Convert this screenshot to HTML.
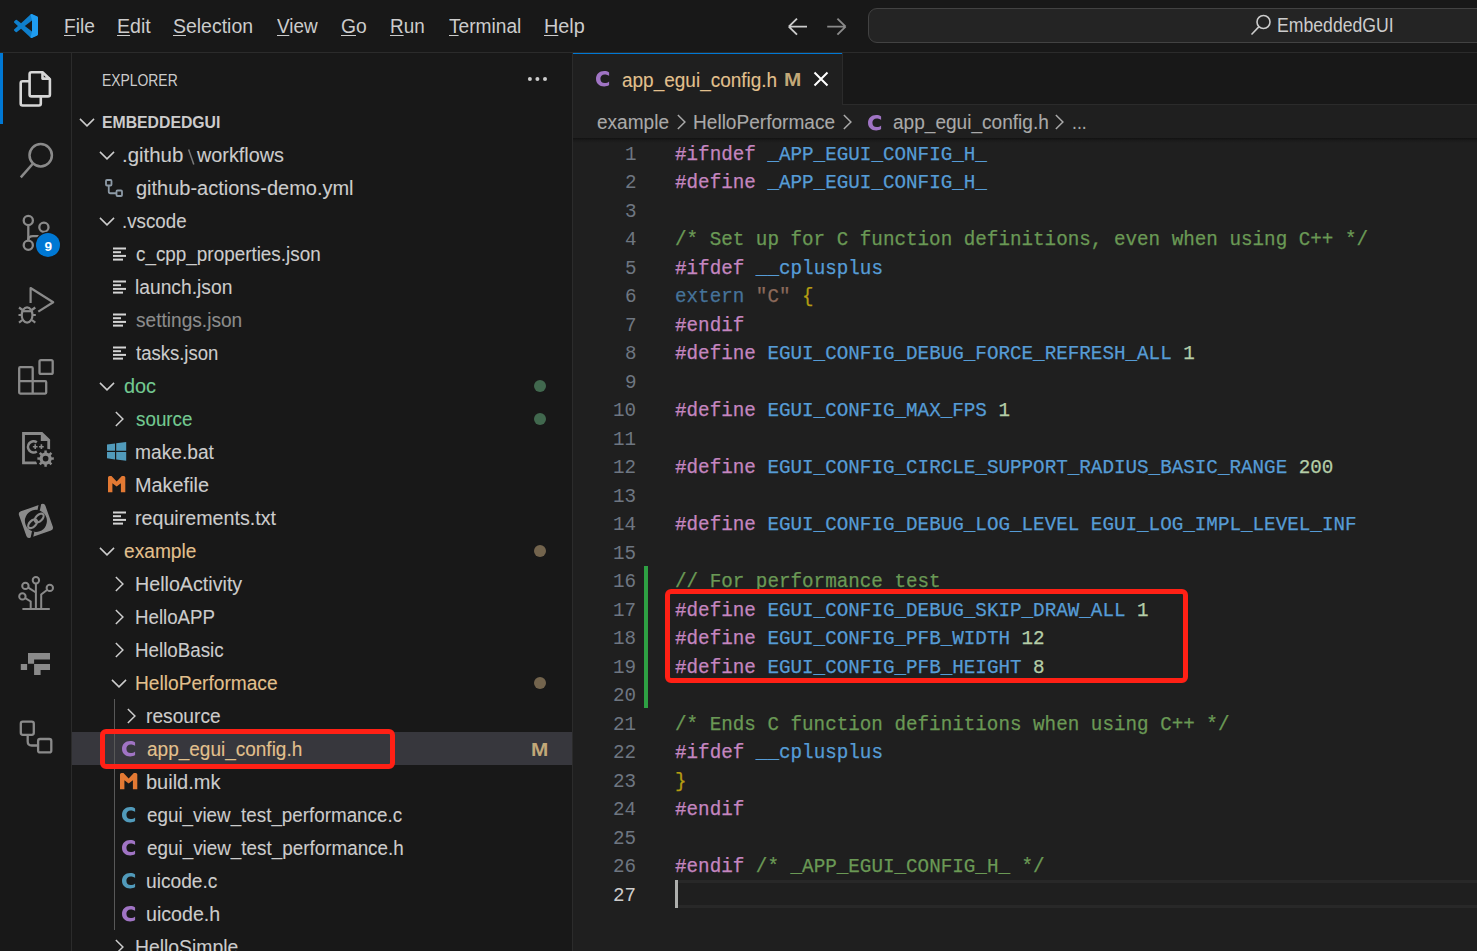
<!DOCTYPE html><html><head><meta charset="utf-8"><style>
*{box-sizing:border-box}
html,body{margin:0;padding:0}
body{width:1477px;height:951px;overflow:hidden;position:relative;background:#1f1f1f;font-family:"Liberation Sans",sans-serif;color:#cccccc}
.a{position:absolute;white-space:pre}
u{text-decoration:underline;text-underline-offset:2px;text-decoration-thickness:1.3px}
.cl{position:absolute;left:0;font-family:"Liberation Mono",monospace;white-space:pre;color:#cccccc;transform-origin:0 0;-webkit-text-stroke:0.25px}
.ln{position:absolute;font-family:"Liberation Mono",monospace;white-space:pre;color:#6e7681;transform-origin:0 0}
.k{color:#c586c0}.m{color:#569cd6}.n{color:#b5cea8}.c{color:#6a9955}

</style></head><body>
<div class="a" style="left:0;top:0;width:1477px;height:52px;background:#181818"></div>
<div class="a" style="left:0;top:52px;width:1477px;height:1px;background:#2b2b2b"></div>
<svg class="a" style="left:14px;top:14px" width="24" height="24" viewBox="0 0 100 100">
<path d="M96.5 10.8 75.9 0.9a6.2 6.2 0 0 0-7.1 1.2L29.4 38.1 12.2 25.1a4.2 4.2 0 0 0-5.3.2L1.4 30.3a4.2 4.2 0 0 0 0 6.2L16.3 50 1.4 63.5a4.2 4.2 0 0 0 0 6.2l5.5 5a4.2 4.2 0 0 0 5.3.2l17.2-13L68.8 97.9a6.2 6.2 0 0 0 7.1 1.2l20.6-9.9a6.2 6.2 0 0 0 3.5-5.6V16.4a6.2 6.2 0 0 0-3.5-5.6zM75 72.7 45.1 50 75 27.3z" fill="#0f7fcc"/>
<path d="M96.5 10.8 75.9 0.9a6.2 6.2 0 0 0-7.1 1.2L75 27.3v45.4l-6.2 25.2a6.2 6.2 0 0 0 7.1 1.2l20.6-9.9a6.2 6.2 0 0 0 3.5-5.6V16.4a6.2 6.2 0 0 0-3.5-5.6z" fill="#1f9cf0"/>
</svg>
<svg class="a" style="left:786px;top:16px" width="24" height="21" viewBox="0 0 24 21">
<path d="M2.8 10.6H21M2.8 10.6L11 2.6M2.8 10.6L11 18.6" stroke="#cccccc" stroke-width="1.9" fill="none"/></svg>
<svg class="a" style="left:825px;top:16px" width="24" height="21" viewBox="0 0 24 21">
<path d="M2.2 10.6H20.6M20.6 10.6L12.4 2.6M20.6 10.6L12.4 18.6" stroke="#8a8a8a" stroke-width="1.9" fill="none"/></svg>
<div class="a" style="left:868px;top:8px;width:640px;height:35px;border:1.5px solid #424242;border-radius:9px;background:#242424"></div>
<svg class="a" style="left:1249px;top:13px" width="24" height="24" viewBox="0 0 24 24">
<circle cx="14.5" cy="9" r="6.5" stroke="#cccccc" stroke-width="1.6" fill="none"/><path d="M10 13.6L2.5 21.5" stroke="#cccccc" stroke-width="1.6"/></svg>
<div class="a" style="left:0;top:53px;width:71px;height:898px;background:#181818"></div>
<div class="a" style="left:71px;top:53px;width:1px;height:898px;background:#2b2b2b"></div>
<div class="a" style="left:0;top:53px;width:3px;height:71px;background:#0078d4"></div>
<svg class="a" style="left:0;top:0" width="72" height="951" viewBox="0 0 72 951">
<g fill="none" stroke="#d7d7d7" stroke-width="2.6" stroke-linejoin="round">
<path d="M31.5 72.2H42.5L49.9 79.3V94.5Q49.9 96.4 48 96.4H31.5Q29.6 96.4 29.6 94.5V74.1Q29.6 72.2 31.5 72.2Z"/>
<path d="M42.5 72.2V78.6H49.9"/>
<path d="M29.6 81.3H22.6Q20.7 81.3 20.7 83.2V103.6Q20.7 105.5 22.6 105.5H38.9Q40.8 105.5 40.8 103.6V96.4"/>
</g>
<g fill="none" stroke="#8a8a8a" stroke-width="2.5">
<circle cx="40.7" cy="155.3" r="11.2"/>
<path d="M33 163.5L20.8 177.4"/>
</g>
<g fill="none" stroke="#8a8a8a" stroke-width="2.3">
<circle cx="28.3" cy="220.5" r="4.6"/>
<circle cx="43.9" cy="227.3" r="4.6"/>
<circle cx="28.3" cy="245.2" r="4.6"/>
<path d="M28.3 225.1V240.6"/>
<path d="M28.3 240Q28.3 236.1 33 236.1H40Q43.9 236.1 43.9 232"/>
</g>
<circle cx="48" cy="244.9" r="13.2" fill="#181818"/>
<circle cx="48" cy="244.9" r="12" fill="#0078d4"/>
<text x="48.3" y="251.2" text-anchor="middle" font-family="Liberation Sans" font-weight="bold" font-size="13.5" fill="#ffffff">9</text>
<g fill="none" stroke="#8a8a8a" stroke-width="2.2" stroke-linejoin="round">
<path d="M30.6 303.1V288L53.2 302.2L38.3 311.6"/>
<ellipse cx="27.1" cy="315" rx="5.4" ry="7.6"/>
<path d="M21.8 311.2H32.4"/>
<path d="M19 307.5L22.5 310M35.3 307.5L31.8 310M18.5 315H21.7M32.5 315H35.8M19 322.6L22.4 320M35.3 322.6L31.9 320"/>
</g>
<g fill="none" stroke="#8a8a8a" stroke-width="2.3" stroke-linejoin="round">
<path d="M19.2 368.2Q19.2 367.2 20.2 367.2H31.7Q32.7 367.2 32.7 368.2V381.2H45.2Q46.2 381.2 46.2 382.2V392.6Q46.2 393.6 45.2 393.6H20.2Q19.2 393.6 19.2 392.6Z"/>
<path d="M19.2 381.2H32.7V393.6"/>
<rect x="39.5" y="360.1" width="13.2" height="13.8" rx="1.5"/>
</g>
<!-- cpp config -->
<g fill="none" stroke="#8a8a8a" stroke-width="2.8" stroke-linejoin="miter">
<path d="M36.9 462.9H23.5V433.5H41.5"/>
<path d="M48.7 440.5V449.5"/>
<path d="M36.81 442.31A5.6 5.6 0 1 0 36.81 451.49" stroke-width="2.65"/>
</g>
<path d="M40.8 432.1H42.3L50.1 439.5V441H40.8Z" fill="#8a8a8a"/>
<g fill="#8a8a8a"><path d="M34.4 444.35h1.6v1.55h1.55v1.6h-1.55v1.55h-1.6v-1.55h-1.55v-1.6h1.55z"/><path d="M40.6 444.35h1.6v1.55h1.55v1.6h-1.55v1.55h-1.6v-1.55h-1.55v-1.6h1.55z"/></g>
<circle cx="45.6" cy="458.6" r="10" fill="#181818"/>
<path fill="#8a8a8a" fill-rule="evenodd" d="M51.68 457.39L53.81 457.37L53.81 459.83L51.68 459.81L50.76 462.04L52.28 463.53L50.53 465.28L49.04 463.76L46.81 464.68L46.83 466.81L44.37 466.81L44.39 464.68L42.16 463.76L40.67 465.28L38.92 463.53L40.44 462.04L39.52 459.81L37.39 459.83L37.39 457.37L39.52 457.39L40.44 455.16L38.92 453.67L40.67 451.92L42.16 453.44L44.39 452.52L44.37 450.39L46.83 450.39L46.81 452.52L49.04 453.44L50.53 451.92L52.28 453.67L50.76 455.16ZM45.60 455.75A2.85 2.85 0 1 0 45.60 461.45A2.85 2.85 0 1 0 45.60 455.75Z"/>
<!-- rotated link icon -->
<g transform="translate(35.9 520.9) rotate(-19.5)">
<path fill="#8a8a8a" fill-rule="evenodd" d="M-11-14H11Q14-14 14-11V11Q14 14 11 14H-11Q-14 14-14 11V-11Q-14-14-11-14ZM0-11A11 11 0 1 0 0 11A11 11 0 1 0 0-11Z"/>
<path d="M10-15.5L6-8.8M-10 15.5L-6 8.8" stroke="#181818" stroke-width="2.4"/>
</g>
<g transform="translate(35.9 520.9)" fill="none" stroke="#8a8a8a" stroke-width="2.2">
<ellipse cx="-3.3" cy="2.9" rx="3.1" ry="5.4" transform="rotate(45 -3.3 2.9)"/>
<ellipse cx="3.3" cy="-2.9" rx="3.1" ry="5.4" transform="rotate(45 3.3 -2.9)"/>
</g>
<!-- tree icon -->
<g fill="none" stroke="#8a8a8a" stroke-width="2">
<path d="M22.4 609H49.8"/>
<path d="M30.7 609V601.5L24.8 597.8"/>
<path d="M35.9 609V583.5"/>
<path d="M35.9 592.5L28.3 587.6"/>
<path d="M41.2 609V594.5L47.3 589.8"/>
<circle cx="22.4" cy="596.4" r="3.2"/>
<circle cx="25.4" cy="585.9" r="3.2"/>
<circle cx="35.9" cy="580.2" r="3.2"/>
<circle cx="49.8" cy="587.9" r="3.2"/>
</g>
<!-- blocks icon -->
<g fill="#8a8a8a">
<path d="M28 653.1H50V659.6H34.1V663.7H28Z"/>
<path d="M34.1 664H50V670H40.6V674.9H34.1Z"/>
<rect x="20.8" y="664" width="6.3" height="6"/>
</g>
<!-- nodes icon -->
<g fill="none" stroke="#8a8a8a" stroke-width="2.3">
<rect x="20.8" y="721.7" width="13" height="13.1" rx="2"/>
<rect x="38.1" y="739" width="13.2" height="13.4" rx="2"/>
<path d="M27.7 734.8V741.5Q27.7 745.5 31.7 745.5H38.1"/>
</g>
</svg>
<div class="a" style="left:72px;top:53px;width:500px;height:898px;background:#181818"></div>
<div class="a" style="left:572px;top:53px;width:1px;height:898px;background:#2b2b2b"></div>
<svg class="a" style="left:520px;top:69px" width="34" height="20"><circle cx="9.9" cy="10.1" r="2" fill="#cccccc"/><circle cx="17.4" cy="10.1" r="2" fill="#cccccc"/><circle cx="25" cy="10.1" r="2" fill="#cccccc"/></svg>
<div class="a" style="left:72px;top:732px;width:500px;height:33px;background:#37373d"></div>
<div class="a" style="left:114px;top:699px;width:1px;height:231px;background:#585858"></div>
<svg class="a" style="left:74.5px;top:109.5px" width="24" height="24" viewBox="0 0 16 16"><path d="M3.3 5.9L8 10.6L12.7 5.9" stroke="#cccccc" stroke-width="1.0" fill="none"/></svg>
<svg class="a" style="left:185px;top:146px" width="12" height="22"><path d="M3.6 3.4L8.8 18.6" stroke="#7a7a7a" stroke-width="1.5"/></svg>
<svg class="a" style="left:94.5px;top:142.5px" width="24" height="24" viewBox="0 0 16 16"><path d="M3.3 5.9L8 10.6L12.7 5.9" stroke="#cccccc" stroke-width="1.0" fill="none"/></svg>
<svg class="a" style="left:105px;top:179px" width="19" height="19" viewBox="0 0 19 19"><g fill="none" stroke="#8d9aa6" stroke-width="1.8"><rect x="1" y="1" width="5.5" height="5.5" rx="1"/><rect x="11.5" y="11.5" width="5.5" height="5.5" rx="1"/><path d="M3.75 6.5V12.5Q3.75 14.25 5.5 14.25H11.5"/></g></svg>
<svg class="a" style="left:94.5px;top:208.5px" width="24" height="24" viewBox="0 0 16 16"><path d="M3.3 5.9L8 10.6L12.7 5.9" stroke="#cccccc" stroke-width="1.0" fill="none"/></svg>
<svg class="a" style="left:113px;top:246.5px" width="14" height="14" viewBox="0 0 14 14"><g fill="#d4d4d4"><rect x="0" y="0.5" width="13" height="2"/><rect x="0" y="4.2" width="8" height="2"/><rect x="0" y="7.9" width="13" height="2"/><rect x="0" y="11.6" width="10" height="2"/></g></svg>
<svg class="a" style="left:113px;top:279.5px" width="14" height="14" viewBox="0 0 14 14"><g fill="#d4d4d4"><rect x="0" y="0.5" width="13" height="2"/><rect x="0" y="4.2" width="8" height="2"/><rect x="0" y="7.9" width="13" height="2"/><rect x="0" y="11.6" width="10" height="2"/></g></svg>
<svg class="a" style="left:113px;top:312.5px" width="14" height="14" viewBox="0 0 14 14"><g fill="#d4d4d4"><rect x="0" y="0.5" width="13" height="2"/><rect x="0" y="4.2" width="8" height="2"/><rect x="0" y="7.9" width="13" height="2"/><rect x="0" y="11.6" width="10" height="2"/></g></svg>
<svg class="a" style="left:113px;top:345.5px" width="14" height="14" viewBox="0 0 14 14"><g fill="#d4d4d4"><rect x="0" y="0.5" width="13" height="2"/><rect x="0" y="4.2" width="8" height="2"/><rect x="0" y="7.9" width="13" height="2"/><rect x="0" y="11.6" width="10" height="2"/></g></svg>
<svg class="a" style="left:94.5px;top:373.5px" width="24" height="24" viewBox="0 0 16 16"><path d="M3.3 5.9L8 10.6L12.7 5.9" stroke="#cccccc" stroke-width="1.0" fill="none"/></svg>
<svg class="a" style="left:106.5px;top:406.5px" width="24" height="24" viewBox="0 0 16 16"><path d="M5.9 3.3L10.6 8L5.9 12.7" stroke="#cccccc" stroke-width="1.0" fill="none"/></svg>
<svg class="a" style="left:106.8px;top:442px" width="20" height="19" viewBox="0 0 20 19"><path d="M0 2.6L8 1.4V8.8H0ZM9.2 1.2L19.2 0V8.8H9.2ZM0 10H8V17.4L0 16.2ZM9.2 10H19.2V18.8L9.2 17.6Z" fill="#519aba"/></svg>
<svg class="a" style="left:107.9px;top:475.9px" width="18" height="17" viewBox="0 0 18 17"><path d="M0 16.3V1.5Q0 0 1.5 0H3.5L8.65 5.6L13.8 0H15.8Q17.3 0 17.3 1.5V16.3H12.9V7.3L8.65 10.5L4.4 7.3V16.3Z" fill="#e37933"/></svg>
<svg class="a" style="left:113px;top:510.5px" width="14" height="14" viewBox="0 0 14 14"><g fill="#d4d4d4"><rect x="0" y="0.5" width="13" height="2"/><rect x="0" y="4.2" width="8" height="2"/><rect x="0" y="7.9" width="13" height="2"/><rect x="0" y="11.6" width="10" height="2"/></g></svg>
<svg class="a" style="left:94.5px;top:538.5px" width="24" height="24" viewBox="0 0 16 16"><path d="M3.3 5.9L8 10.6L12.7 5.9" stroke="#cccccc" stroke-width="1.0" fill="none"/></svg>
<svg class="a" style="left:106.5px;top:571.5px" width="24" height="24" viewBox="0 0 16 16"><path d="M5.9 3.3L10.6 8L5.9 12.7" stroke="#cccccc" stroke-width="1.0" fill="none"/></svg>
<svg class="a" style="left:106.5px;top:604.5px" width="24" height="24" viewBox="0 0 16 16"><path d="M5.9 3.3L10.6 8L5.9 12.7" stroke="#cccccc" stroke-width="1.0" fill="none"/></svg>
<svg class="a" style="left:106.5px;top:637.5px" width="24" height="24" viewBox="0 0 16 16"><path d="M5.9 3.3L10.6 8L5.9 12.7" stroke="#cccccc" stroke-width="1.0" fill="none"/></svg>
<svg class="a" style="left:106.5px;top:670.5px" width="24" height="24" viewBox="0 0 16 16"><path d="M3.3 5.9L8 10.6L12.7 5.9" stroke="#cccccc" stroke-width="1.0" fill="none"/></svg>
<svg class="a" style="left:118.5px;top:703.5px" width="24" height="24" viewBox="0 0 16 16"><path d="M5.9 3.3L10.6 8L5.9 12.7" stroke="#cccccc" stroke-width="1.0" fill="none"/></svg>
<svg class="a" style="left:122px;top:740.7px" width="14" height="16" viewBox="0 0 14 16"><path d="M13.1 1.4C11.8 0.4 10.2 0 8.2 0C3.3 0 0 3.3 0 7.75C0 12.3 3.3 15.5 8.2 15.5C10.2 15.5 11.8 15.1 13.1 14.1V10.6C12 11.6 10.4 12.1 8.7 12.1C6 12.1 4.4 10.4 4.4 7.75C4.4 5.1 6 3.4 8.7 3.4C10.4 3.4 12 3.9 13.1 4.9Z" fill="#a074c4"/></svg>
<svg class="a" style="left:119.9px;top:772.9px" width="18" height="17" viewBox="0 0 18 17"><path d="M0 16.3V1.5Q0 0 1.5 0H3.5L8.65 5.6L13.8 0H15.8Q17.3 0 17.3 1.5V16.3H12.9V7.3L8.65 10.5L4.4 7.3V16.3Z" fill="#e37933"/></svg>
<svg class="a" style="left:122px;top:806.7px" width="14" height="16" viewBox="0 0 14 16"><path d="M13.1 1.4C11.8 0.4 10.2 0 8.2 0C3.3 0 0 3.3 0 7.75C0 12.3 3.3 15.5 8.2 15.5C10.2 15.5 11.8 15.1 13.1 14.1V10.6C12 11.6 10.4 12.1 8.7 12.1C6 12.1 4.4 10.4 4.4 7.75C4.4 5.1 6 3.4 8.7 3.4C10.4 3.4 12 3.9 13.1 4.9Z" fill="#519aba"/></svg>
<svg class="a" style="left:122px;top:839.7px" width="14" height="16" viewBox="0 0 14 16"><path d="M13.1 1.4C11.8 0.4 10.2 0 8.2 0C3.3 0 0 3.3 0 7.75C0 12.3 3.3 15.5 8.2 15.5C10.2 15.5 11.8 15.1 13.1 14.1V10.6C12 11.6 10.4 12.1 8.7 12.1C6 12.1 4.4 10.4 4.4 7.75C4.4 5.1 6 3.4 8.7 3.4C10.4 3.4 12 3.9 13.1 4.9Z" fill="#a074c4"/></svg>
<svg class="a" style="left:122px;top:872.7px" width="14" height="16" viewBox="0 0 14 16"><path d="M13.1 1.4C11.8 0.4 10.2 0 8.2 0C3.3 0 0 3.3 0 7.75C0 12.3 3.3 15.5 8.2 15.5C10.2 15.5 11.8 15.1 13.1 14.1V10.6C12 11.6 10.4 12.1 8.7 12.1C6 12.1 4.4 10.4 4.4 7.75C4.4 5.1 6 3.4 8.7 3.4C10.4 3.4 12 3.9 13.1 4.9Z" fill="#519aba"/></svg>
<svg class="a" style="left:122px;top:905.7px" width="14" height="16" viewBox="0 0 14 16"><path d="M13.1 1.4C11.8 0.4 10.2 0 8.2 0C3.3 0 0 3.3 0 7.75C0 12.3 3.3 15.5 8.2 15.5C10.2 15.5 11.8 15.1 13.1 14.1V10.6C12 11.6 10.4 12.1 8.7 12.1C6 12.1 4.4 10.4 4.4 7.75C4.4 5.1 6 3.4 8.7 3.4C10.4 3.4 12 3.9 13.1 4.9Z" fill="#a074c4"/></svg>
<svg class="a" style="left:106.5px;top:934.5px" width="24" height="24" viewBox="0 0 16 16"><path d="M5.9 3.3L10.6 8L5.9 12.7" stroke="#cccccc" stroke-width="1.0" fill="none"/></svg>
<div class="a" style="left:534px;top:379.5px;width:12px;height:12px;border-radius:6px;background:#73c991;opacity:0.45"></div>
<div class="a" style="left:534px;top:412.5px;width:12px;height:12px;border-radius:6px;background:#73c991;opacity:0.45"></div>
<div class="a" style="left:534px;top:544.5px;width:12px;height:12px;border-radius:6px;background:#e2c08d;opacity:0.45"></div>
<div class="a" style="left:534px;top:676.5px;width:12px;height:12px;border-radius:6px;background:#e2c08d;opacity:0.45"></div>
<div class="a" style="left:573px;top:53px;width:904px;height:52px;background:#181818"></div>
<div class="a" style="left:842px;top:104px;width:635px;height:1px;background:#2b2b2b"></div>
<div class="a" style="left:573px;top:53px;width:269px;height:52px;background:#1f1f1f;border-top:1.5px solid #0078d4"></div>
<div class="a" style="left:842px;top:53px;width:1px;height:52px;background:#2b2b2b"></div>
<svg class="a" style="left:596.3px;top:70.5px" width="14" height="16" viewBox="0 0 14 16"><path d="M13.1 1.4C11.8 0.4 10.2 0 8.2 0C3.3 0 0 3.3 0 7.75C0 12.3 3.3 15.5 8.2 15.5C10.2 15.5 11.8 15.1 13.1 14.1V10.6C12 11.6 10.4 12.1 8.7 12.1C6 12.1 4.4 10.4 4.4 7.75C4.4 5.1 6 3.4 8.7 3.4C10.4 3.4 12 3.9 13.1 4.9Z" fill="#a074c4"/></svg>
<svg class="a" style="left:813px;top:71px" width="16" height="16" viewBox="0 0 16 16"><path d="M1.5 1.5L14.5 14.5M14.5 1.5L1.5 14.5" stroke="#ffffff" stroke-width="2"/></svg>
<div class="a" style="left:573px;top:105px;width:904px;height:33px;background:#1f1f1f"></div>
<svg class="a" style="left:668.5px;top:109.5px" width="24" height="24" viewBox="0 0 16 16"><path d="M5.9 3.3L10.6 8L5.9 12.7" stroke="#a9a9a9" stroke-width="1.0" fill="none"/></svg>
<svg class="a" style="left:835px;top:109.5px" width="24" height="24" viewBox="0 0 16 16"><path d="M5.9 3.3L10.6 8L5.9 12.7" stroke="#a9a9a9" stroke-width="1.0" fill="none"/></svg>
<svg class="a" style="left:867.5px;top:115px" width="14" height="16" viewBox="0 0 14 16"><path d="M13.1 1.4C11.8 0.4 10.2 0 8.2 0C3.3 0 0 3.3 0 7.75C0 12.3 3.3 15.5 8.2 15.5C10.2 15.5 11.8 15.1 13.1 14.1V10.6C12 11.6 10.4 12.1 8.7 12.1C6 12.1 4.4 10.4 4.4 7.75C4.4 5.1 6 3.4 8.7 3.4C10.4 3.4 12 3.9 13.1 4.9Z" fill="#a074c4"/></svg>
<svg class="a" style="left:1047px;top:109.5px" width="24" height="24" viewBox="0 0 16 16"><path d="M5.9 3.3L10.6 8L5.9 12.7" stroke="#a9a9a9" stroke-width="1.0" fill="none"/></svg>
<div class="a" style="left:573px;top:138px;width:904px;height:5px;background:linear-gradient(#121212,#1a1a1a 45%,#1f1f1f)"></div>
<div class="a" style="left:63.52px;top:14.00px;font-family:'Liberation Sans',sans-serif;font-size:19.5px;line-height:24px;transform:scaleX(0.9800);transform-origin:0 0;color:#cccccc"><u>F</u>ile</div>
<div class="a" style="left:116.60px;top:14.00px;font-family:'Liberation Sans',sans-serif;font-size:19.5px;line-height:24px;transform:scaleX(1.0030);transform-origin:0 0;color:#cccccc"><u>E</u>dit</div>
<div class="a" style="left:173.40px;top:14.00px;font-family:'Liberation Sans',sans-serif;font-size:19.5px;line-height:24px;transform:scaleX(0.9974);transform-origin:0 0;color:#cccccc"><u>S</u>election</div>
<div class="a" style="left:276.80px;top:14.00px;font-family:'Liberation Sans',sans-serif;font-size:19.5px;line-height:24px;transform:scaleX(0.9714);transform-origin:0 0;color:#cccccc"><u>V</u>iew</div>
<div class="a" style="left:340.91px;top:14.00px;font-family:'Liberation Sans',sans-serif;font-size:19.5px;line-height:24px;transform:scaleX(0.9880);transform-origin:0 0;color:#cccccc"><u>G</u>o</div>
<div class="a" style="left:390.23px;top:14.00px;font-family:'Liberation Sans',sans-serif;font-size:19.5px;line-height:24px;transform:scaleX(0.9676);transform-origin:0 0;color:#cccccc"><u>R</u>un</div>
<div class="a" style="left:448.80px;top:14.00px;font-family:'Liberation Sans',sans-serif;font-size:19.5px;line-height:24px;transform:scaleX(0.9822);transform-origin:0 0;color:#cccccc"><u>T</u>erminal</div>
<div class="a" style="left:544.38px;top:14.00px;font-family:'Liberation Sans',sans-serif;font-size:19.5px;line-height:24px;transform:scaleX(1.0154);transform-origin:0 0;color:#cccccc"><u>H</u>elp</div>
<div class="a" style="left:1276.80px;top:12.80px;font-family:'Liberation Sans',sans-serif;font-size:19.5px;line-height:24px;transform:scaleX(0.9047);transform-origin:0 0;color:#cccccc">EmbeddedGUI</div>
<div class="a" style="left:101.96px;top:68.00px;font-family:'Liberation Sans',sans-serif;font-size:16.5px;line-height:24px;transform:scaleX(0.8420);transform-origin:0 0;color:#cccccc">EXPLORER</div>
<div class="a" style="left:101.84px;top:110.00px;font-family:'Liberation Sans',sans-serif;font-size:16.5px;font-weight:bold;line-height:24px;transform:scaleX(0.9566);transform-origin:0 0;color:#cccccc">EMBEDDEDGUI</div>
<div class="a" style="left:122.15px;top:143.00px;font-family:'Liberation Sans',sans-serif;font-size:19.5px;-webkit-text-stroke:0.1px;line-height:24px;transform:scaleX(1.0474);transform-origin:0 0;color:#cccccc">.github</div>
<div class="a" style="left:197.10px;top:143.00px;font-family:'Liberation Sans',sans-serif;font-size:19.5px;-webkit-text-stroke:0.1px;line-height:24px;transform:scaleX(1.0153);transform-origin:0 0;color:#cccccc">workflows</div>
<div class="a" style="left:135.50px;top:176.00px;font-family:'Liberation Sans',sans-serif;font-size:19.5px;-webkit-text-stroke:0.1px;line-height:24px;transform:scaleX(1.0241);transform-origin:0 0;color:#cccccc">github-actions-demo.yml</div>
<div class="a" style="left:122.24px;top:209.00px;font-family:'Liberation Sans',sans-serif;font-size:19.5px;-webkit-text-stroke:0.1px;line-height:24px;transform:scaleX(0.9621);transform-origin:0 0;color:#cccccc">.vscode</div>
<div class="a" style="left:135.50px;top:242.00px;font-family:'Liberation Sans',sans-serif;font-size:19.5px;-webkit-text-stroke:0.1px;line-height:24px;transform:scaleX(0.9679);transform-origin:0 0;color:#cccccc">c_cpp_properties.json</div>
<div class="a" style="left:134.61px;top:275.00px;font-family:'Liberation Sans',sans-serif;font-size:19.5px;-webkit-text-stroke:0.1px;line-height:24px;transform:scaleX(0.9866);transform-origin:0 0;color:#cccccc">launch.json</div>
<div class="a" style="left:135.60px;top:308.00px;font-family:'Liberation Sans',sans-serif;font-size:19.5px;-webkit-text-stroke:0.1px;line-height:24px;transform:scaleX(0.9796);transform-origin:0 0;color:#8c8c8c">settings.json</div>
<div class="a" style="left:135.60px;top:341.00px;font-family:'Liberation Sans',sans-serif;font-size:19.5px;-webkit-text-stroke:0.1px;line-height:24px;transform:scaleX(0.9488);transform-origin:0 0;color:#cccccc">tasks.json</div>
<div class="a" style="left:123.60px;top:374.00px;font-family:'Liberation Sans',sans-serif;font-size:19.5px;-webkit-text-stroke:0.1px;line-height:24px;transform:scaleX(1.0194);transform-origin:0 0;color:#73c991">doc</div>
<div class="a" style="left:135.60px;top:407.00px;font-family:'Liberation Sans',sans-serif;font-size:19.5px;-webkit-text-stroke:0.1px;line-height:24px;transform:scaleX(0.9655);transform-origin:0 0;color:#73c991">source</div>
<div class="a" style="left:134.62px;top:440.00px;font-family:'Liberation Sans',sans-serif;font-size:19.5px;-webkit-text-stroke:0.1px;line-height:24px;transform:scaleX(0.9838);transform-origin:0 0;color:#cccccc">make.bat</div>
<div class="a" style="left:134.58px;top:473.00px;font-family:'Liberation Sans',sans-serif;font-size:19.5px;-webkit-text-stroke:0.1px;line-height:24px;transform:scaleX(1.0197);transform-origin:0 0;color:#cccccc">Makefile</div>
<div class="a" style="left:134.59px;top:506.00px;font-family:'Liberation Sans',sans-serif;font-size:19.5px;-webkit-text-stroke:0.1px;line-height:24px;transform:scaleX(1.0086);transform-origin:0 0;color:#cccccc">requirements.txt</div>
<div class="a" style="left:123.60px;top:539.00px;font-family:'Liberation Sans',sans-serif;font-size:19.5px;-webkit-text-stroke:0.1px;line-height:24px;transform:scaleX(0.9822);transform-origin:0 0;color:#e2c08d">example</div>
<div class="a" style="left:134.79px;top:572.00px;font-family:'Liberation Sans',sans-serif;font-size:19.5px;-webkit-text-stroke:0.1px;line-height:24px;transform:scaleX(1.0094);transform-origin:0 0;color:#cccccc">HelloActivity</div>
<div class="a" style="left:134.84px;top:605.00px;font-family:'Liberation Sans',sans-serif;font-size:19.5px;-webkit-text-stroke:0.1px;line-height:24px;transform:scaleX(0.9585);transform-origin:0 0;color:#cccccc">HelloAPP</div>
<div class="a" style="left:134.84px;top:638.00px;font-family:'Liberation Sans',sans-serif;font-size:19.5px;-webkit-text-stroke:0.1px;line-height:24px;transform:scaleX(0.9626);transform-origin:0 0;color:#cccccc">HelloBasic</div>
<div class="a" style="left:134.82px;top:671.00px;font-family:'Liberation Sans',sans-serif;font-size:19.5px;-webkit-text-stroke:0.1px;line-height:24px;transform:scaleX(0.9819);transform-origin:0 0;color:#e2c08d">HelloPerformace</div>
<div class="a" style="left:146.42px;top:704.00px;font-family:'Liberation Sans',sans-serif;font-size:19.5px;-webkit-text-stroke:0.1px;line-height:24px;transform:scaleX(0.9838);transform-origin:0 0;color:#cccccc">resource</div>
<div class="a" style="left:147.40px;top:737.00px;font-family:'Liberation Sans',sans-serif;font-size:19.5px;-webkit-text-stroke:0.1px;line-height:24px;transform:scaleX(0.9742);transform-origin:0 0;color:#e2c08d">app_egui_config.h</div>
<div class="a" style="left:146.38px;top:770.00px;font-family:'Liberation Sans',sans-serif;font-size:19.5px;-webkit-text-stroke:0.1px;line-height:24px;transform:scaleX(1.0250);transform-origin:0 0;color:#cccccc">build.mk</div>
<div class="a" style="left:147.40px;top:803.00px;font-family:'Liberation Sans',sans-serif;font-size:19.5px;-webkit-text-stroke:0.1px;line-height:24px;transform:scaleX(0.9644);transform-origin:0 0;color:#cccccc">egui_view_test_performance.c</div>
<div class="a" style="left:147.40px;top:836.00px;font-family:'Liberation Sans',sans-serif;font-size:19.5px;-webkit-text-stroke:0.1px;line-height:24px;transform:scaleX(0.9668);transform-origin:0 0;color:#cccccc">egui_view_test_performance.h</div>
<div class="a" style="left:146.42px;top:869.00px;font-family:'Liberation Sans',sans-serif;font-size:19.5px;-webkit-text-stroke:0.1px;line-height:24px;transform:scaleX(0.9833);transform-origin:0 0;color:#cccccc">uicode.c</div>
<div class="a" style="left:146.39px;top:902.00px;font-family:'Liberation Sans',sans-serif;font-size:19.5px;-webkit-text-stroke:0.1px;line-height:24px;transform:scaleX(1.0056);transform-origin:0 0;color:#cccccc">uicode.h</div>
<div class="a" style="left:134.61px;top:935.00px;font-family:'Liberation Sans',sans-serif;font-size:19.5px;-webkit-text-stroke:0.1px;line-height:24px;transform:scaleX(0.9922);transform-origin:0 0;color:#cccccc">HelloSimple</div>
<div class="a" style="left:530.85px;top:737.50px;font-family:'Liberation Sans',sans-serif;font-size:18px;font-weight:bold;line-height:24px;transform:scaleX(1.1538);transform-origin:0 0;color:#c2a878">M</div>
<div class="a" style="left:621.50px;top:67.50px;font-family:'Liberation Sans',sans-serif;font-size:19.5px;-webkit-text-stroke:0.1px;line-height:24px;transform:scaleX(0.9736);transform-origin:0 0;color:#e2c08d">app_egui_config.h</div>
<div class="a" style="left:783.55px;top:68.00px;font-family:'Liberation Sans',sans-serif;font-size:18px;font-weight:bold;line-height:24px;transform:scaleX(1.1538);transform-origin:0 0;color:#c2a878">M</div>
<div class="a" style="left:597.40px;top:109.80px;font-family:'Liberation Sans',sans-serif;font-size:19.5px;-webkit-text-stroke:0.1px;line-height:24px;transform:scaleX(0.9767);transform-origin:0 0;color:#a9a9a9">example</div>
<div class="a" style="left:693.22px;top:109.80px;font-family:'Liberation Sans',sans-serif;font-size:19.5px;-webkit-text-stroke:0.1px;line-height:24px;transform:scaleX(0.9785);transform-origin:0 0;color:#a9a9a9">HelloPerformace</div>
<div class="a" style="left:892.60px;top:109.80px;font-family:'Liberation Sans',sans-serif;font-size:19.5px;-webkit-text-stroke:0.1px;line-height:24px;transform:scaleX(0.9774);transform-origin:0 0;color:#a9a9a9">app_egui_config.h</div>
<div class="a" style="left:1072.10px;top:109.80px;font-family:'Liberation Sans',sans-serif;font-size:19.5px;-webkit-text-stroke:0.1px;line-height:24px;transform:scaleX(0.9000);transform-origin:0 0;color:#a9a9a9">...</div>
<div class="a" style="left:678px;top:880px;width:799px;height:28px;border-top:3px solid #282828;border-bottom:3px solid #282828"></div>
<div class="ln" style="left:624.75px;top:141.00px;font-size:20px;line-height:28.5px;transform:scaleX(0.9624);color:#6e7681">1</div>
<div class="cl" style="left:675.10px;top:141.00px;font-size:20px;line-height:28.5px;transform:scaleX(0.9624)"><span class="k">#ifndef</span> <span class="m">_APP_EGUI_CONFIG_H_</span></div>
<div class="ln" style="left:624.75px;top:169.00px;font-size:20px;line-height:28.5px;transform:scaleX(0.9624);color:#6e7681">2</div>
<div class="cl" style="left:675.10px;top:169.00px;font-size:20px;line-height:28.5px;transform:scaleX(0.9624)"><span class="k">#define</span> <span class="m">_APP_EGUI_CONFIG_H_</span></div>
<div class="ln" style="left:624.75px;top:198.00px;font-size:20px;line-height:28.5px;transform:scaleX(0.9624);color:#6e7681">3</div>
<div class="ln" style="left:624.75px;top:226.00px;font-size:20px;line-height:28.5px;transform:scaleX(0.9624);color:#6e7681">4</div>
<div class="cl" style="left:675.10px;top:226.00px;font-size:20px;line-height:28.5px;transform:scaleX(0.9624)"><span class="c">/* Set up for C function definitions, even when using C++ */</span></div>
<div class="ln" style="left:624.75px;top:255.00px;font-size:20px;line-height:28.5px;transform:scaleX(0.9624);color:#6e7681">5</div>
<div class="cl" style="left:675.10px;top:255.00px;font-size:20px;line-height:28.5px;transform:scaleX(0.9624)"><span class="k">#ifdef</span> <span class="m">__cplusplus</span></div>
<div class="ln" style="left:624.75px;top:283.00px;font-size:20px;line-height:28.5px;transform:scaleX(0.9624);color:#6e7681">6</div>
<div class="cl" style="left:675.10px;top:283.00px;font-size:20px;line-height:28.5px;transform:scaleX(0.9624)"><span style="color:#46739a">extern</span> <span style="color:#8c6a5b">"C"</span> <span style="color:#b49c12">{</span></div>
<div class="ln" style="left:624.75px;top:312.00px;font-size:20px;line-height:28.5px;transform:scaleX(0.9624);color:#6e7681">7</div>
<div class="cl" style="left:675.10px;top:312.00px;font-size:20px;line-height:28.5px;transform:scaleX(0.9624)"><span class="k">#endif</span></div>
<div class="ln" style="left:624.75px;top:340.00px;font-size:20px;line-height:28.5px;transform:scaleX(0.9624);color:#6e7681">8</div>
<div class="cl" style="left:675.10px;top:340.00px;font-size:20px;line-height:28.5px;transform:scaleX(0.9624)"><span class="k">#define</span> <span class="m">EGUI_CONFIG_DEBUG_FORCE_REFRESH_ALL</span> <span class="n">1</span></div>
<div class="ln" style="left:624.75px;top:369.00px;font-size:20px;line-height:28.5px;transform:scaleX(0.9624);color:#6e7681">9</div>
<div class="ln" style="left:613.20px;top:397.00px;font-size:20px;line-height:28.5px;transform:scaleX(0.9624);color:#6e7681">10</div>
<div class="cl" style="left:675.10px;top:397.00px;font-size:20px;line-height:28.5px;transform:scaleX(0.9624)"><span class="k">#define</span> <span class="m">EGUI_CONFIG_MAX_FPS</span> <span class="n">1</span></div>
<div class="ln" style="left:613.20px;top:426.00px;font-size:20px;line-height:28.5px;transform:scaleX(0.9624);color:#6e7681">11</div>
<div class="ln" style="left:613.20px;top:454.00px;font-size:20px;line-height:28.5px;transform:scaleX(0.9624);color:#6e7681">12</div>
<div class="cl" style="left:675.10px;top:454.00px;font-size:20px;line-height:28.5px;transform:scaleX(0.9624)"><span class="k">#define</span> <span class="m">EGUI_CONFIG_CIRCLE_SUPPORT_RADIUS_BASIC_RANGE</span> <span class="n">200</span></div>
<div class="ln" style="left:613.20px;top:483.00px;font-size:20px;line-height:28.5px;transform:scaleX(0.9624);color:#6e7681">13</div>
<div class="ln" style="left:613.20px;top:511.00px;font-size:20px;line-height:28.5px;transform:scaleX(0.9624);color:#6e7681">14</div>
<div class="cl" style="left:675.10px;top:511.00px;font-size:20px;line-height:28.5px;transform:scaleX(0.9624)"><span class="k">#define</span> <span class="m">EGUI_CONFIG_DEBUG_LOG_LEVEL</span> <span class="m">EGUI_LOG_IMPL_LEVEL_INF</span></div>
<div class="ln" style="left:613.20px;top:540.00px;font-size:20px;line-height:28.5px;transform:scaleX(0.9624);color:#6e7681">15</div>
<div class="ln" style="left:613.20px;top:568.00px;font-size:20px;line-height:28.5px;transform:scaleX(0.9624);color:#6e7681">16</div>
<div class="cl" style="left:675.10px;top:568.00px;font-size:20px;line-height:28.5px;transform:scaleX(0.9624)"><span class="c">// For performance test</span></div>
<div class="ln" style="left:613.20px;top:597.00px;font-size:20px;line-height:28.5px;transform:scaleX(0.9624);color:#6e7681">17</div>
<div class="cl" style="left:675.10px;top:597.00px;font-size:20px;line-height:28.5px;transform:scaleX(0.9624)"><span class="k">#define</span> <span class="m">EGUI_CONFIG_DEBUG_SKIP_DRAW_ALL</span> <span class="n">1</span></div>
<div class="ln" style="left:613.20px;top:625.00px;font-size:20px;line-height:28.5px;transform:scaleX(0.9624);color:#6e7681">18</div>
<div class="cl" style="left:675.10px;top:625.00px;font-size:20px;line-height:28.5px;transform:scaleX(0.9624)"><span class="k">#define</span> <span class="m">EGUI_CONFIG_PFB_WIDTH</span> <span class="n">12</span></div>
<div class="ln" style="left:613.20px;top:654.00px;font-size:20px;line-height:28.5px;transform:scaleX(0.9624);color:#6e7681">19</div>
<div class="cl" style="left:675.10px;top:654.00px;font-size:20px;line-height:28.5px;transform:scaleX(0.9624)"><span class="k">#define</span> <span class="m">EGUI_CONFIG_PFB_HEIGHT</span> <span class="n">8</span></div>
<div class="ln" style="left:613.20px;top:682.00px;font-size:20px;line-height:28.5px;transform:scaleX(0.9624);color:#6e7681">20</div>
<div class="ln" style="left:613.20px;top:711.00px;font-size:20px;line-height:28.5px;transform:scaleX(0.9624);color:#6e7681">21</div>
<div class="cl" style="left:675.10px;top:711.00px;font-size:20px;line-height:28.5px;transform:scaleX(0.9624)"><span class="c">/* Ends C function definitions when using C++ */</span></div>
<div class="ln" style="left:613.20px;top:739.00px;font-size:20px;line-height:28.5px;transform:scaleX(0.9624);color:#6e7681">22</div>
<div class="cl" style="left:675.10px;top:739.00px;font-size:20px;line-height:28.5px;transform:scaleX(0.9624)"><span class="k">#ifdef</span> <span class="m">__cplusplus</span></div>
<div class="ln" style="left:613.20px;top:768.00px;font-size:20px;line-height:28.5px;transform:scaleX(0.9624);color:#6e7681">23</div>
<div class="cl" style="left:675.10px;top:768.00px;font-size:20px;line-height:28.5px;transform:scaleX(0.9624)"><span style="color:#b49c12">}</span></div>
<div class="ln" style="left:613.20px;top:796.00px;font-size:20px;line-height:28.5px;transform:scaleX(0.9624);color:#6e7681">24</div>
<div class="cl" style="left:675.10px;top:796.00px;font-size:20px;line-height:28.5px;transform:scaleX(0.9624)"><span class="k">#endif</span></div>
<div class="ln" style="left:613.20px;top:825.00px;font-size:20px;line-height:28.5px;transform:scaleX(0.9624);color:#6e7681">25</div>
<div class="ln" style="left:613.20px;top:853.00px;font-size:20px;line-height:28.5px;transform:scaleX(0.9624);color:#6e7681">26</div>
<div class="cl" style="left:675.10px;top:853.00px;font-size:20px;line-height:28.5px;transform:scaleX(0.9624)"><span class="k">#endif</span> <span class="c">/* _APP_EGUI_CONFIG_H_ */</span></div>
<div class="ln" style="left:613.20px;top:882.00px;font-size:20px;line-height:28.5px;transform:scaleX(0.9624);color:#cccccc">27</div>
<div class="a" style="left:644px;top:565.5px;width:4px;height:142.5px;background:#2ea043"></div>
<div class="a" style="left:675px;top:880px;width:3px;height:28px;background:#aeafad"></div>
<div class="a" style="left:99.7px;top:729.3px;width:295px;height:40.2px;border:5.3px solid #ff2015;border-radius:6px"></div>
<div class="a" style="left:665.3px;top:588.6px;width:523.1px;height:94.9px;border:5.3px solid #ff2015;border-radius:6px"></div>
</body></html>
